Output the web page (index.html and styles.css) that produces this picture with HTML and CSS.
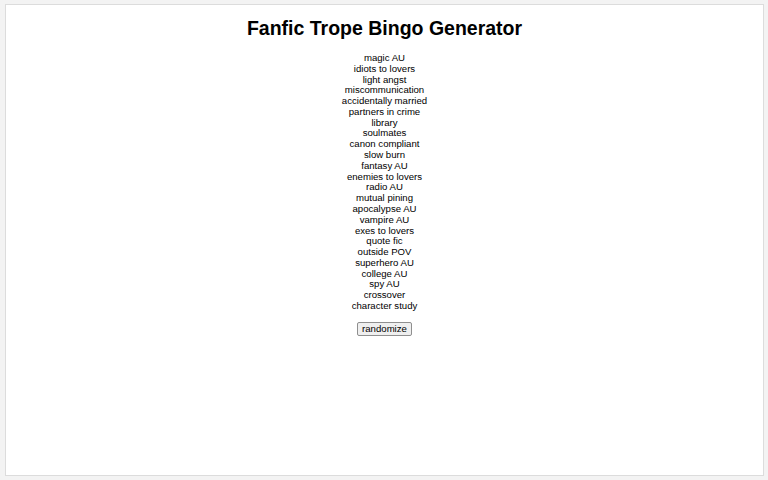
FILE: index.html
```html
<!DOCTYPE html>
<html lang="en">
<head>
  <meta charset="UTF-8" />
  <meta name="viewport" content="width=device-width, initial-scale=1.0"/>
  <title>Fanfic Trope Bingo Generator</title>
  <link rel="stylesheet" href="styles.css">
</head>
<body>
  <div class="page">
    <h1>Fanfic Trope Bingo Generator</h1>

    <ul class="tropes" id="tropes">
      <li>magic AU</li>
      <li>idiots to lovers</li>
      <li>light angst</li>
      <li>miscommunication</li>
      <li>accidentally married</li>
      <li>partners in crime</li>
      <li>library</li>
      <li>soulmates</li>
      <li>canon compliant</li>
      <li>slow burn</li>
      <li>fantasy AU</li>
      <li>enemies to lovers</li>
      <li>radio AU</li>
      <li>mutual pining</li>
      <li>apocalypse AU</li>
      <li>vampire AU</li>
      <li>exes to lovers</li>
      <li>quote fic</li>
      <li>outside POV</li>
      <li>superhero AU</li>
      <li>college AU</li>
      <li>spy AU</li>
      <li>crossover</li>
      <li>character study</li>
    </ul>

    <button class="randomize" id="randomize">randomize</button>
  </div>

  <script>
    // shuffle the trope list in place
    document.getElementById('randomize').addEventListener('click', () => {
      const list = document.getElementById('tropes');
      const items = Array.from(list.children);
      for (let i = items.length - 1; i > 0; i--) {
        const j = Math.floor(Math.random() * (i + 1));
        [items[i], items[j]] = [items[j], items[i]];
      }
      items.forEach(li => list.appendChild(li));
    });
  </script>
</body>
</html>
```

FILE: styles.css
```css
* { margin: 0; padding: 0; box-sizing: border-box; }
html, body { height: 100%; }
body {
  font-family: "Liberation Sans", Arial, sans-serif;
  background: #f3f3f3;
  padding: 4px 4px 4px 5px;
  color: #000;
}
.page {
  height: 472px;
  background: #fff;
  border: 1px solid #dcdcdc;
  display: flex; flex-direction: column; align-items: center;
  padding-top: 12px;
}
h1 {
  font-size: 19.5px; font-weight: bold; line-height: 22px;
  margin-bottom: 14px;
}
.tropes {
  list-style: none; text-align: center;
  font-size: 9.6px; line-height: 10.78px;
}
.randomize {
  margin-top: 10px;
  font-family: "Liberation Sans", Arial, sans-serif;
  font-size: 9.6px;
  height: 14px; padding: 0 4px;
  background: #efefef;
  border: 1px solid #8f8f8f; border-radius: 2px;
  color: #000;
}
```
